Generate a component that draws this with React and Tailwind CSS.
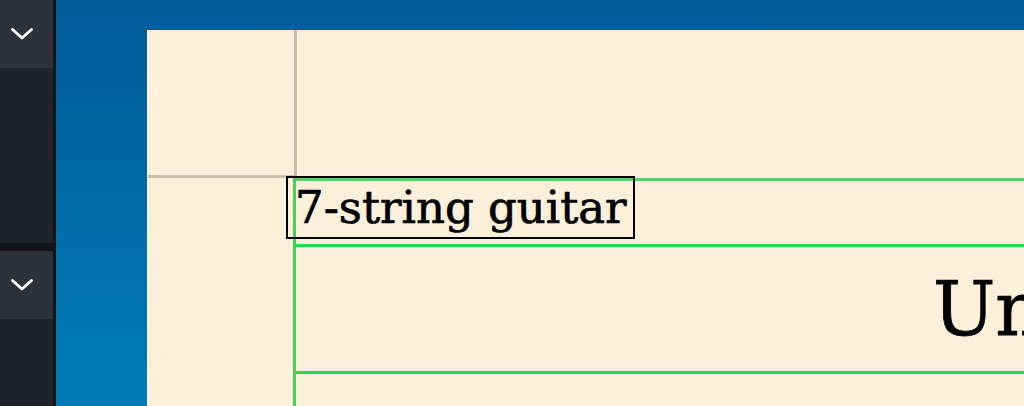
import React from 'react'

function Chevron() {
  return (
    <svg width="22" height="12" viewBox="0 0 22 12" fill="none" className="text-white">
      <path d="M1.5 1.5 11 10 20.5 1.5" stroke="currentColor" strokeWidth="2.8" strokeLinecap="round" strokeLinejoin="round" />
    </svg>
  )
}

function SidePanel({ children }) {
  return (
    <div className="flex flex-col">
      <div className="h-[68px] bg-[#2d323a] flex items-center pl-[11px]">
        <Chevron />
      </div>
      {children}
    </div>
  )
}

export default function App() {
  return (
    <div className="flex w-[1024px] h-[406px] overflow-hidden" style={{ fontFamily: '"DejaVu Serif", serif' }}>
      {/* sidebar */}
      <div className="w-[56px] shrink-0 bg-[#1f2226] border-r-[3px] border-[#121315] flex flex-col">
        <SidePanel>
          <div className="h-[175px] bg-[#1f2226]" />
        </SidePanel>
        <div className="h-[8px] bg-[#141517]" />
        <SidePanel>
          <div className="flex-1 bg-[#1f2226]" />
        </SidePanel>
      </div>

      {/* workspace */}
      <div className="flex-1 bg-gradient-to-b from-[#005b94] to-[#007cb9] pl-[91px] pt-[30px]">
        <div className="relative h-full bg-[#fdf0da] border-l border-[#fff6e8] overflow-hidden flex flex-col">
          <div className="flex h-[148px] shrink-0">
            <div className="w-[146px] border-b-[3px] border-[#cbc1ab]" />
            <div className="w-[3px] bg-[#cbc1ab]" />
            <div className="flex-1" />
          </div>
          <div className="flex flex-1">
            <div className="w-[145px] shrink-0" />
            <div className="flex-1 border-l-[3px] border-[#47cf5a] flex flex-col">
              <div className="h-[69px] border-t-[3px] border-b-[3px] border-t-[#62cc6e] border-b-[#23dc46]" />
              <div className="h-[127px] border-b-[3px] border-[#23dc46] flex items-center pl-[637px] whitespace-nowrap">
                <span className="text-[74px] leading-none text-black [-webkit-text-stroke:0.8px_black]">Un</span>
              </div>
              <div className="flex-1" />
            </div>
          </div>

          {/* selected label */}
          <div className="absolute left-[138px] top-[146px] w-[349px] h-[63px] border-2 border-black flex items-center pl-[7px] whitespace-nowrap">
            <span className="text-[45px] leading-none text-black [-webkit-text-stroke:0.7px_black]">7-string guitar</span>
          </div>
        </div>
      </div>
    </div>
  )
}
